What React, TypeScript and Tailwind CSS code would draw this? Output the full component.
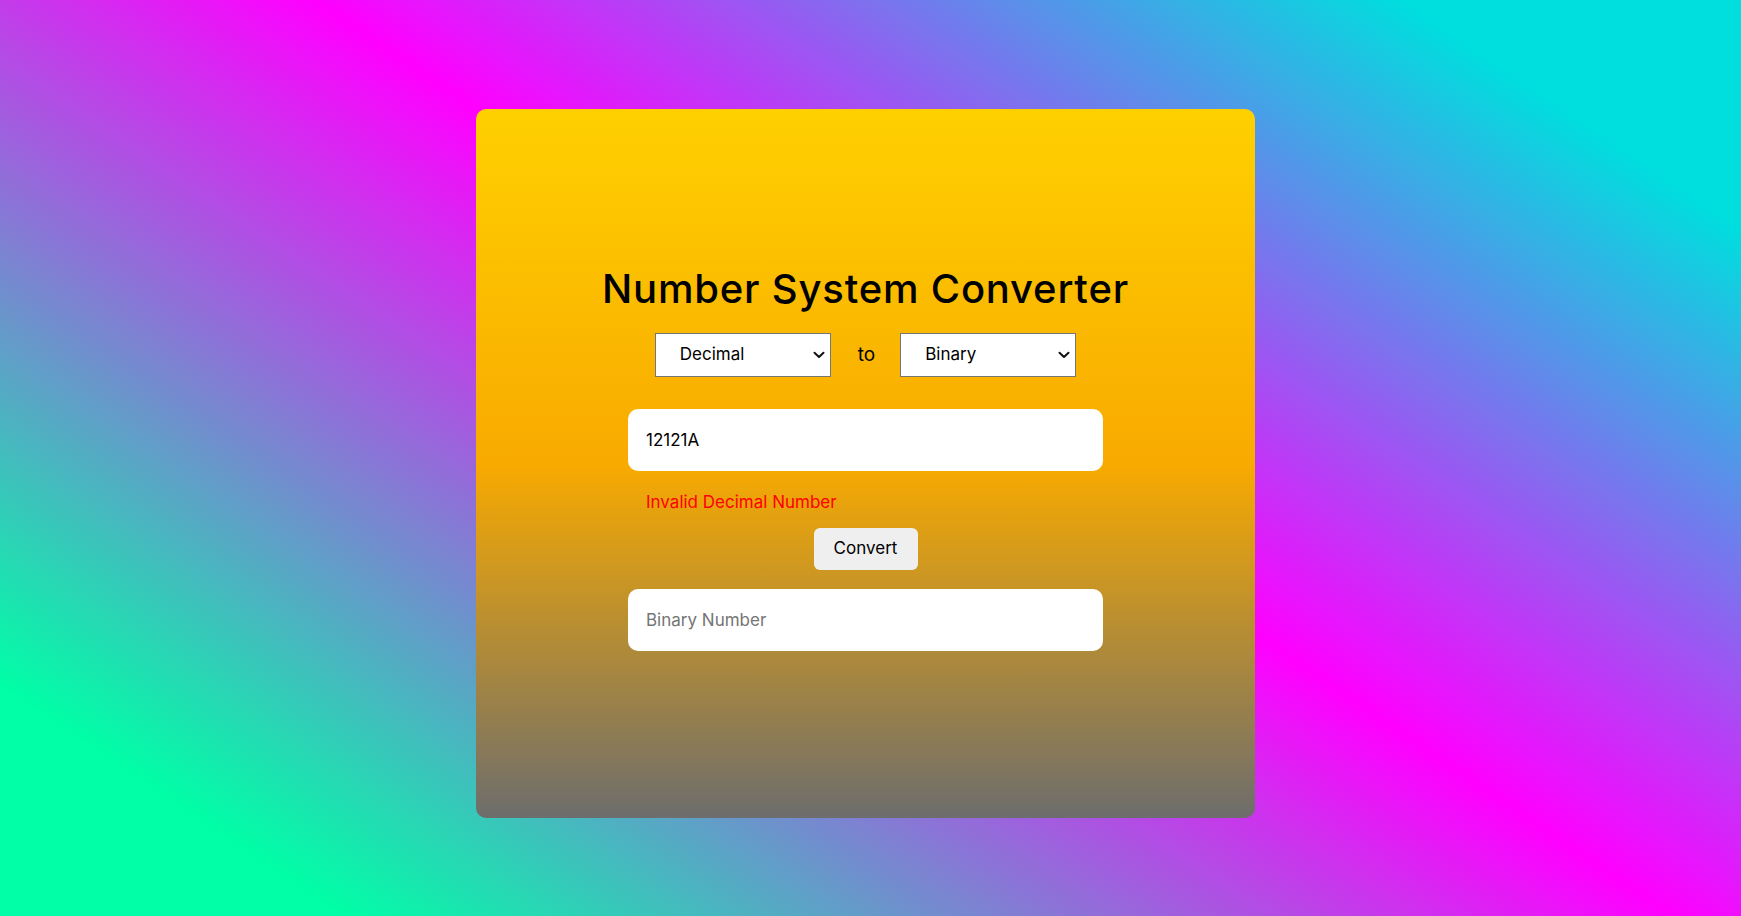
import React from "react";

function Chevron() {
  return (
    <svg
      className="pointer-events-none absolute right-[6px] top-1/2 -translate-y-1/2"
      width="12"
      height="8"
      viewBox="0 0 12 8"
      fill="none"
    >
      <path d="M1.5 1.8 L6 6 L10.5 1.8" stroke="#111" strokeWidth="2" strokeLinecap="round" strokeLinejoin="round" />
    </svg>
  );
}

function Select({ value, options }: { value: string; options: string[] }) {
  return (
    <div className="relative">
      <select
        defaultValue={value}
        className="block h-[44px] w-[176px] appearance-none rounded-none border border-[#767676] bg-white pl-[24px] text-[17px] text-black outline-none font-[Inter,sans-serif]"
      >
        {options.map((o) => (
          <option key={o} value={o}>
            {o}
          </option>
        ))}
      </select>
      <Chevron />
    </div>
  );
}

export default function App() {
  const opts = ["Decimal", "Binary", "Octal", "Hexadecimal"];
  return (
    <div className="min-h-screen w-full bg-[linear-gradient(34deg,#00ffa6_11%,#ff00ff_54%,#00dede_89%)] pt-[109px] font-[Inter,sans-serif]">
      <div className="ml-[476px] flex h-[709px] w-[779px] flex-col items-center rounded-[10px] bg-[linear-gradient(#ffd000,#f8aa00_50%,#6d6d6d)] pt-[160px]">
        <h1 className="text-[40px] leading-[39px] font-medium tracking-[0.8px] text-black">
          Number System Converter
        </h1>
        <div className="mt-[25px] flex items-center">
          <Select value="Decimal" options={opts} />
          <span className="ml-[27px] mr-[25px] text-[19px] text-black">to</span>
          <Select value="Binary" options={opts} />
        </div>
        <input
          defaultValue="12121A"
          className="mt-[32px] h-[62px] w-[475px] rounded-[10px] bg-white px-[18px] text-[17px] text-black outline-none"
        />
        <div className="mt-[19px] w-[475px] pl-[18px] text-[17px] leading-[24px] text-[#ff0000]">
          Invalid Decimal Number
        </div>
        <button className="mt-[14px] h-[42px] w-[104px] rounded-[6px] bg-[#efefef] text-[17px] text-black">
          Convert
        </button>
        <input
          placeholder="Binary Number"
          className="mt-[19px] h-[62px] w-[475px] rounded-[10px] bg-white px-[18px] text-[17px] text-black outline-none placeholder:text-[#757575]"
        />
      </div>
    </div>
  );
}
